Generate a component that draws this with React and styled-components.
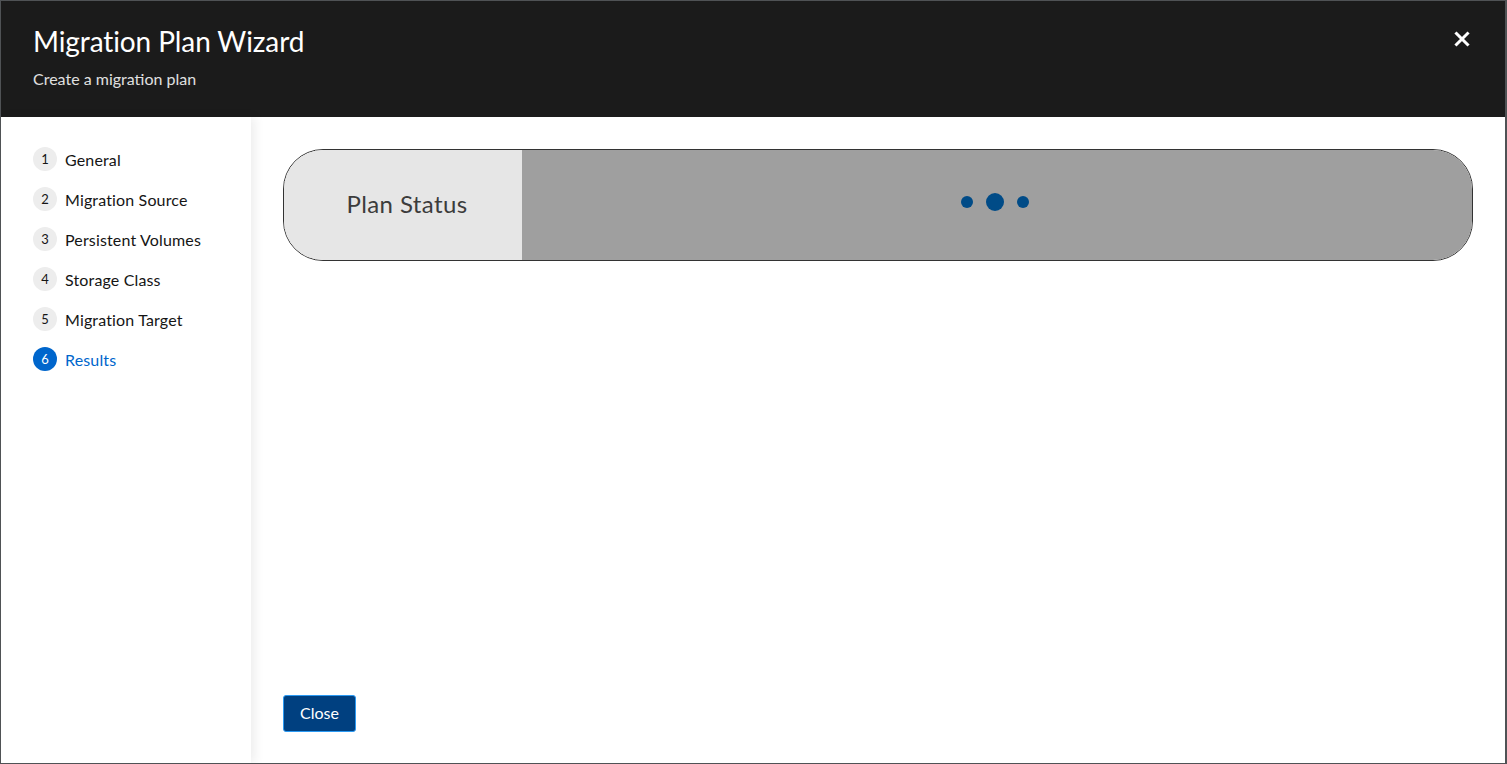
import React from "react";
import styled, { createGlobalStyle } from "styled-components";

const steps = [
  "General",
  "Migration Source",
  "Persistent Volumes",
  "Storage Class",
  "Migration Target",
  "Results",
];

const App = () => {
  const current = 6;

  return (
    <>
      <GlobalStyle />
      <Modal>
        <Header>
          <Title>Migration Plan Wizard</Title>
          <Subtitle>Create a migration plan</Subtitle>
          <CloseIcon aria-label="Close">
            <svg width="16" height="16" viewBox="0 0 16 16">
              <path d="M2.5 2.5 L13.5 13.5 M13.5 2.5 L2.5 13.5" stroke="#fff" strokeWidth="3" strokeLinecap="square" />
            </svg>
          </CloseIcon>
        </Header>
        <Body>
          <Nav>
            {steps.map((name, i) => (
              <Step key={name} $active={i + 1 === current}>
                <StepNum $active={i + 1 === current}>{i + 1}</StepNum>
                {name}
              </Step>
            ))}
          </Nav>
          <Main>
            <StatusBar>
              <StatusLabel>Plan Status</StatusLabel>
              <StatusValue>
                <Dot $size={12} />
                <Dot $size={18} />
                <Dot $size={12} />
              </StatusValue>
            </StatusBar>
            <Footer>
              <Button>Close</Button>
            </Footer>
          </Main>
        </Body>
      </Modal>
    </>
  );
};

const GlobalStyle = createGlobalStyle`
    html, body {
        margin:0;
        padding:0;
        background:#fff;
        font-family:"Open Sans", "Liberation Sans", sans-serif;
    }
`

const Modal = styled.div`
    box-sizing:border-box;
    width:1507px;
    height:764px;
    border:1px solid #4f5255;
    border-right-width:2px;
    display:flex;
    flex-direction:column;
    overflow:hidden;
`

const Header = styled.div`
    position:relative;
    background-color:#1b1b1b;
    height:116px;
    padding:22px 32px 0;
    box-sizing:border-box;
    flex-shrink:0;
`

const Title = styled.h1`
    margin:0;
    font-family:"Lato", "Open Sans", sans-serif;
    font-weight:400;
    font-size:28px;
    line-height:36px;
    letter-spacing:-0.1px;
    color:#fff;
`

const Subtitle = styled.p`
    margin:9px 0 0;
    font-family:"Lato", "Open Sans", sans-serif;
    font-size:16px;
    line-height:22px;
    color:#e0e0e0;
`

const CloseIcon = styled.button`
    position:absolute;
    top:30px;
    right:35px;
    width:16px;
    height:16px;
    padding:0;
    border:none;
    background:none;
    cursor:pointer;
    display:flex;
`

const Body = styled.div`
    flex:1;
    display:flex;
    min-height:0;
`

const Nav = styled.nav`
    width:250px;
    flex-shrink:0;
    padding:30px 0 0 32px;
    box-sizing:border-box;
    display:flex;
    flex-direction:column;
    gap:16px;
    box-shadow:4px 0 10px rgba(0,0,0,0.07);
    position:relative;
    z-index:1;
`

const Step = styled.div`
    display:flex;
    align-items:center;
    gap:8px;
    height:24px;
    font-family:"Lato", "Open Sans", sans-serif;
    font-size:16px;
    letter-spacing:0.15px;
    color:${p => p.$active ? "#0066cc" : "#151515"};
`

const StepNum = styled.span`
    width:24px;
    height:24px;
    border-radius:50%;
    display:flex;
    align-items:center;
    justify-content:center;
    font-size:13px;
    letter-spacing:0;
    background-color:${p => p.$active ? "#0066cc" : "#ededed"};
    color:${p => p.$active ? "#fff" : "#151515"};
`

const Main = styled.div`
    flex:1;
    display:flex;
    flex-direction:column;
    padding:32px 32px 31px;
`

const StatusBar = styled.div`
    display:flex;
    height:112px;
    border:1px solid #333;
    border-radius:40px;
    overflow:hidden;
    box-sizing:border-box;
`

const StatusLabel = styled.div`
    width:238px;
    display:flex;
    align-items:center;
    justify-content:center;
    background-color:#e6e6e6;
    font-family:"Lato", "Open Sans", sans-serif;
    font-size:24px;
    letter-spacing:0.4px;
    color:#3c3c3c;
    padding-bottom:4px;
    padding-left:8px;
    box-sizing:border-box;
`

const StatusValue = styled.div`
    flex:1;
    display:flex;
    align-items:center;
    justify-content:center;
    gap:13px;
    background-color:#9f9f9f;
    padding-right:5px;
    padding-bottom:6px;
`

const Dot = styled.span`
    width:${p => p.$size}px;
    height:${p => p.$size}px;
    border-radius:50%;
    background-color:#004b87;
`

const Footer = styled.div`
    margin-top:auto;
    display:flex;
`

const Button = styled.button`
    height:37px;
    padding:0 16px 3px;
    border:1px solid #2b9af3;
    border-radius:3px;
    background-color:#004080;
    color:#fff;
    font-family:"Lato", "Open Sans", sans-serif;
    font-size:16px;
    cursor:pointer;
`

export default App;
